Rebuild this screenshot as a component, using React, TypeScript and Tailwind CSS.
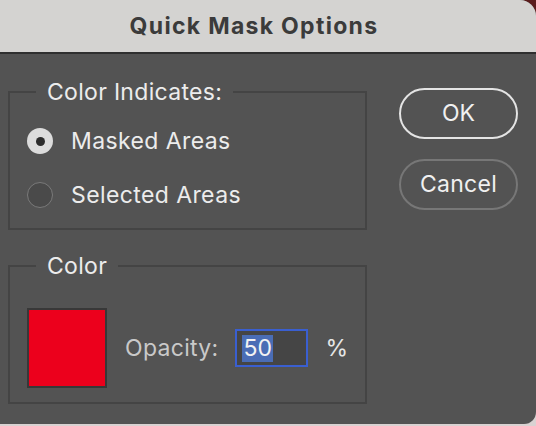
const font = { fontFamily: "Inter, 'Noto Sans', sans-serif" };

function Radio({ checked, label }: { checked?: boolean; label: string }) {
  return (
    <label className="flex items-center gap-[18px]">
      {checked ? (
        <span className="flex h-[26px] w-[26px] items-center justify-center rounded-full bg-[#dcdcdc]">
          <span className="h-[9px] w-[9px] rounded-full bg-[#2c2c2c]" />
        </span>
      ) : (
        <span className="h-[26px] w-[26px] rounded-full border-[1.5px] border-[#7a7a7a] bg-[#4a4a4a]" />
      )}
      <span className="text-[23px] leading-[26px] tracking-[0.4px] text-[#ececec]">{label}</span>
    </label>
  );
}

export default function App() {
  return (
    <div className="h-[426px] w-[536px] bg-[linear-gradient(#5a1c1c_0%,#5a1c1c_20%,#d9d2d2_80%)]" style={font}>
      <div className="flex h-[424px] flex-col overflow-hidden rounded-tr-[16px] rounded-br-[12px] bg-[#535353]">
        <div className="flex h-[54px] items-center justify-center border-b-2 border-[#2f2f2f] bg-[#d4d3d1] pr-[28px]">
          <h1 className="text-[23px] font-bold tracking-[1.3px] text-[#3b3b3b]">Quick Mask Options</h1>
        </div>

        <div className="flex">
          <div className="ml-[8px] mt-[24px] flex w-[359px] flex-col gap-[22px]">
            <fieldset className="h-[152px] border-2 border-[#444444] pl-[17px]">
              <legend className="ml-[9px] px-[11px] text-[23px] leading-[28px] tracking-[0.3px] text-[#ececec]">Color Indicates:</legend>
              <div className="mt-[22px] flex flex-col gap-[28px]">
                <Radio checked label="Masked Areas" />
                <Radio label="Selected Areas" />
              </div>
            </fieldset>

            <fieldset className="h-[152px] border-2 border-[#444444] pl-[17px]">
              <legend className="ml-[9px] px-[11px] text-[23px] leading-[28px] tracking-[0.3px] text-[#ececec]">Color</legend>
              <div className="mt-[28px] flex items-center">
                <div className="h-[80px] w-[80px] border-2 border-[#383838] bg-[#ec001c]" />
                <span className="ml-[18px] text-[23px] tracking-[0.3px] text-[#c9c9c9]">Opacity:</span>
                <div className="ml-[17px] flex h-[38px] w-[73px] items-center border-2 border-[#3a5fd0] bg-[#454545] pl-[5px]">
                  <span className="bg-[#4a6db5] px-[1px] text-[23px] leading-[27px] text-[#f2f2f2]">50</span>
                </div>
                <span className="ml-[17px] text-[23px] text-[#e6e6e6]">%</span>
              </div>
            </fieldset>
          </div>

          <div className="ml-[32px] mt-[34px] flex flex-col gap-[20px]">
            <button className="h-[51px] w-[119px] rounded-full border-2 border-[#e4e4e4] text-[23px] text-[#f0f0f0]">OK</button>
            <button className="h-[51px] w-[119px] rounded-full border-2 border-[#777777] text-[23px] tracking-[0.3px] text-[#f0f0f0]">Cancel</button>
          </div>
        </div>
      </div>
    </div>
  );
}
